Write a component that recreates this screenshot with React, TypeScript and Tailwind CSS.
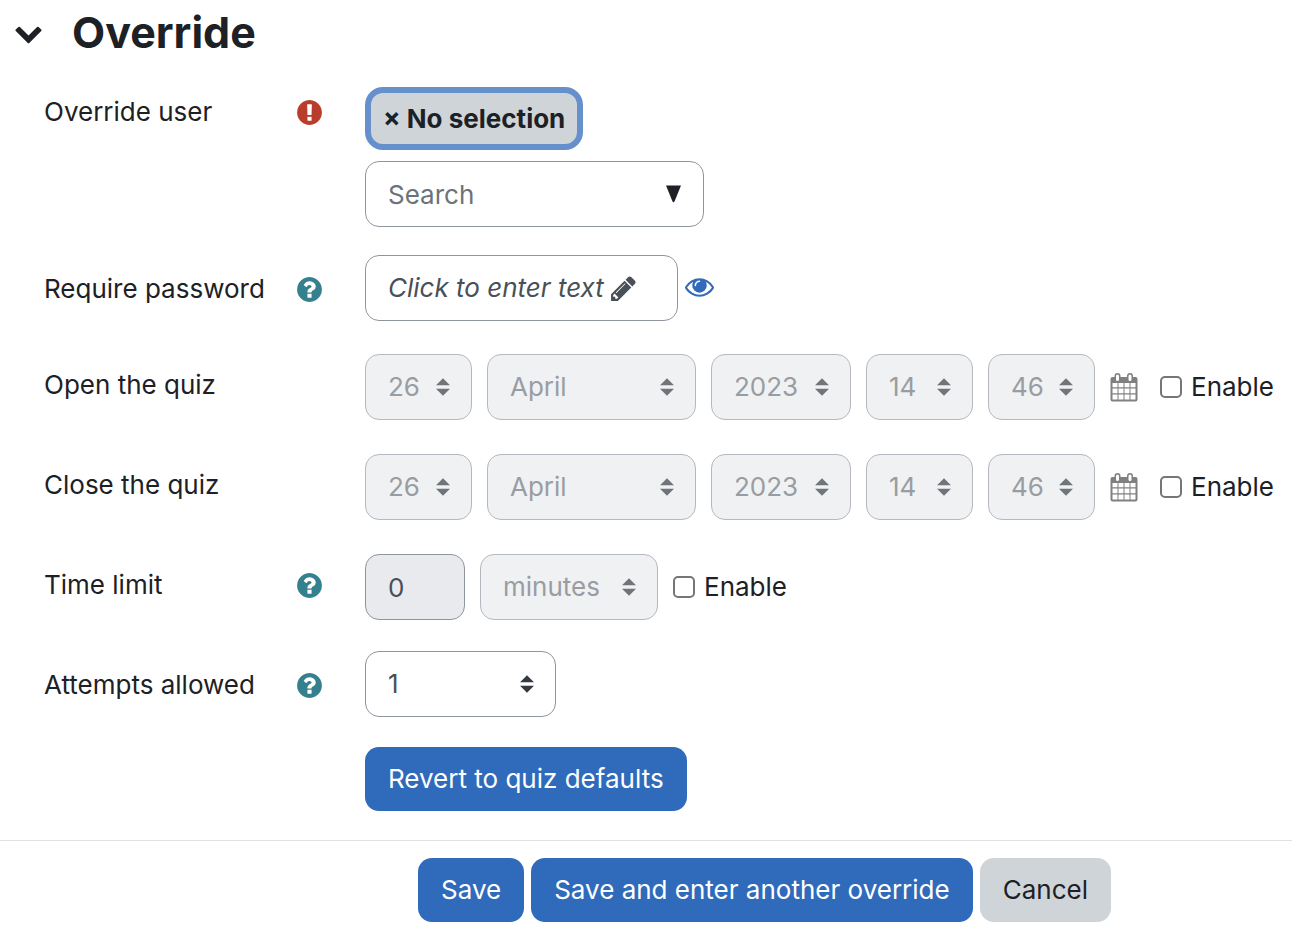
import { useState, type ReactNode } from 'react'
import clsx from 'clsx'

const iconPaths = {
  chevron:
    'M1683 808l-742 741q-19 19-45 19t-45-19l-742-741q-19-19-19-45.500t19-45.500l166-165q19-19 45-19t45 19l531 531 531-531q19-19 45-19t45 19l166 165q19 19 19 45.500t-19 45.500z',
  required:
    'M896 128q209 0 385.500 103t279.500 279.500 103 385.500-103 385.500-279.500 279.500-385.500 103-385.500-103-279.500-279.500-103-385.500 103-385.500 279.500-279.500 385.500-103zm128 1247v-190q0-14-9-23.500t-22-9.500h-192q-13 0-23 10t-10 23v190q0 13 10 23t23 10h192q13 0 22-9.500t9-23.500zm-2-344l18-621q0-12-10-18-10-8-24-8h-220q-14 0-24 8-10 6-10 18l17 621q0 10 10 17.500t24 7.500h185q14 0 23.500-7.500t10.500-17.500z',
  help:
    'M1024 1376v-192q0-14-9-23t-23-9h-192q-14 0-23 9t-9 23v192q0 14 9 23t23 9h192q14 0 23-9t9-23zm256-672q0-88-55.500-163t-138.500-116-170-41q-243 0-371 213-15 24 8 42l132 100q7 6 19 6 16 0 25-12 53-68 86-92 34-24 86-24 48 0 85.500 26t37.500 59q0 38-20 61t-68 45q-63 28-115.500 86.500t-52.500 125.500v36q0 14 9 23t23 9h192q14 0 23-9t9-23q0-19 21.500-49.500t54.500-49.500q32-18 49-28.500t46-35 44.500-48 28-60.500 12.500-81zm384 192q0 209-103 385.500t-279.500 279.500-385.500 103-385.500-103-279.500-279.500-103-385.500 103-385.500 279.500-279.500 385.500-103 385.500 103 279.500 279.500 103 385.500z',
  pencil:
    'M491 1536l91-91-235-235-91 91v107h128v128h107zm523-928q0-22-22-22-10 0-17 7l-542 542q-7 7-7 17 0 22 22 22 10 0 17-7l542-542q7-7 7-17zm-54-192l416 416-832 832h-416v-416zm683 96q0 53-37 90l-166 166-416-416 166-165q36-38 90-38 53 0 91 38l235 234q37 39 37 91z',
  eye:
    'M1664 960q-152-236-381-353 61 104 61 225 0 185-131.500 316.500t-316.500 131.500-316.500-131.500-131.500-316.500q0-121 61-225-229 117-381 353 133 205 333.500 326.500t434.500 121.500 434.500-121.500 333.500-326.500zm-720-384q0-20-14-34t-34-14q-125 0-214.500 89.500t-89.500 214.500q0 20 14 34t34 14 34-14 14-34q0-86 61-147t147-61q20 0 34-14t14-34zm848 384q0 34-20 69-140 230-376.500 368.500t-499.500 138.500-499.500-139-376.500-368q-20-35-20-69t20-69q140-229 376.500-368t499.500-139 499.500 139 376.500 368q20 35 20 69z',
}

function Icon({ name, className }: { name: keyof typeof iconPaths; className?: string }) {
  return (
    <svg viewBox="0 0 1792 1792" fill="currentColor" aria-hidden="true" className={clsx('size-[29px] shrink-0', className)}>
      <path d={iconPaths[name]} />
    </svg>
  )
}

function CalendarIcon() {
  return (
    <svg viewBox="0 0 28 30" aria-hidden="true" className="h-[30px] w-7">
      <path
        fill="#808080"
        fillRule="evenodd"
        d="M2.500 5H4.500V4a3 3 0 0 1 6 0V5H17V4a3 3 0 0 1 6 0V5H25.500A2 2 0 0 1 27.500 7V27.500A2 2 0 0 1 25.500 29.500H2.500A2 2 0 0 1 .5 27.500V7A2 2 0 0 1 2.500 5ZM6 4V7.500a1.500 1.500 0 0 0 3 0V4a1.500 1.500 0 0 0-3 0ZM18.500 4V7.500a1.500 1.500 0 0 0 3 0V4a1.500 1.500 0 0 0-3 0Z"
      />
      <path
        fill="#fff"
        d="M2.500 11H7.500V15.300H2.500ZM8.500 11H13.500V15.300H8.500ZM14.500 11H19.500V15.300H14.500ZM20.500 11H25.500V15.300H20.500ZM2.500 16.500H7.500V21.300H2.500ZM8.500 16.500H13.500V21.300H8.500ZM14.500 16.500H19.500V21.300H14.500ZM20.500 16.500H25.500V21.300H20.500ZM2.500 22.500H7.500V27.500H2.500ZM8.500 22.500H13.500V27.500H8.500ZM14.500 22.500H19.500V27.500H14.500ZM20.500 22.500H25.500V27.500H20.500Z"
      />
    </svg>
  )
}

interface SelectProps {
  label: string
  options: string[]
  width: string
  id?: string
  disabled?: boolean
}

function Select({ label, options, width, id, disabled }: SelectProps) {
  return (
    <div className={clsx('relative shrink-0', width)}>
      <select
        id={id}
        aria-label={label}
        disabled={disabled}
        className="h-[66px] w-full appearance-none rounded-[14px] border border-[#8f959e] bg-white pl-[22px] text-[#495057] disabled:border-[#b5b8be] disabled:bg-[#f0f1f3] disabled:text-[#999da2]"
      >
        {options.map((option) => (
          <option key={option}>{option}</option>
        ))}
      </select>
      <svg
        viewBox="0 0 4 5"
        aria-hidden="true"
        className={clsx('pointer-events-none absolute top-6 right-[22px] h-[18px] w-[14px]', disabled ? 'fill-[#717478]' : 'fill-[#343a40]')}
      >
        <path d="M2 0L0 2h4zm0 5L0 3h4z" />
      </svg>
    </div>
  )
}

interface RowProps {
  label: string
  labelPadding: string
  htmlFor?: string
  icon?: ReactNode
  children: ReactNode
}

function Row({ label, labelPadding, htmlFor, icon, children }: RowProps) {
  return (
    <div className="grid grid-cols-[321px_1fr]">
      <div className={clsx('flex items-start justify-between pr-[41px]', labelPadding)}>
        <label htmlFor={htmlFor} className="leading-10">
          {label}
        </label>
        {icon && <span className="flex h-10 items-center">{icon}</span>}
      </div>
      {children}
    </div>
  )
}

function HelpButton({ topic }: { topic: string }) {
  return (
    <button type="button" aria-label={`Help with ${topic}`} className="text-[#35808f]">
      <Icon name="help" />
    </button>
  )
}

function Enable({ checked, onChange }: { checked: boolean; onChange: (checked: boolean) => void }) {
  return (
    <label className="flex items-center gap-[9px]">
      <input
        type="checkbox"
        checked={checked}
        onChange={(e) => onChange(e.target.checked)}
        className="size-[22px] appearance-none rounded-[5px] border-2 border-[#767676] bg-white checked:bg-[#306aba]"
      />
      Enable
    </label>
  )
}

function DateRow({ label }: { label: string }) {
  const [enabled, setEnabled] = useState(false)

  return (
    <Row label={label} labelPadding="pt-[11px]">
      <div className="flex items-center">
        <div className="flex gap-[15px]">
          <Select label={`${label} day`} options={['26']} width="w-[107px]" disabled={!enabled} />
          <Select label={`${label} month`} options={['April']} width="w-[209px]" disabled={!enabled} />
          <Select label={`${label} year`} options={['2023']} width="w-[140px]" disabled={!enabled} />
          <Select label={`${label} hour`} options={['14']} width="w-[107px]" disabled={!enabled} />
          <Select label={`${label} minute`} options={['46']} width="w-[107px]" disabled={!enabled} />
        </div>
        <button type="button" aria-label={`${label} calendar`} className="mr-[22px] ml-[15px]">
          <CalendarIcon />
        </button>
        <Enable checked={enabled} onChange={setEnabled} />
      </div>
    </Row>
  )
}

export default function App() {
  const [open, setOpen] = useState(true)
  const [limited, setLimited] = useState(false)

  const buttonClass = 'h-16 rounded-[14px] px-[23px]'

  return (
    <form
      onSubmit={(e) => e.preventDefault()}
      className="bg-white font-[Inter,'Liberation_Sans',sans-serif] text-[26px] leading-10 text-[#1d2125]"
    >
      <h3 className="flex h-16 items-center gap-[29px] pl-[14px] text-[43px] font-bold">
        <button type="button" aria-expanded={open} aria-label="Collapse Override" onClick={() => setOpen(!open)}>
          <Icon name="chevron" className={open ? undefined : '-rotate-90'} />
        </button>
        Override
      </h3>

      {open && (
        <div className="pt-[23px] pl-11">
          <div className="flex flex-col gap-7">
            <Row
              label="Override user"
              labelPadding="pt-[5px]"
              htmlFor="user"
              icon={<Icon name="required" className="text-[#b93d2b]" />}
            >
              <div className="flex flex-col items-start gap-[11px]">
                <button
                  type="button"
                  className="h-[63px] rounded-[18px] border-[6px] border-[#6590cc] bg-[#cfd4d8] px-3 font-bold"
                >
                  × No selection
                </button>
                <div className="relative w-[339px]">
                  <input
                    id="user"
                    type="text"
                    placeholder="Search"
                    className="h-[66px] w-full rounded-[14px] border border-[#8f959e] px-[22px] placeholder:text-[#6a737b]"
                  />
                  <svg viewBox="0 0 17 18" aria-hidden="true" className="pointer-events-none absolute top-6 right-[22px] h-[18px] w-[17px]">
                    <path d="M1 .5H16L9.500 16.500Q8.500 18 7.500 16.500Z" fill="#1d2125" />
                  </svg>
                </div>
              </div>
            </Row>

            <Row label="Require password" labelPadding="pt-[14px]" icon={<HelpButton topic="Require password" />}>
              <div className="flex items-center gap-[7px]">
                <button
                  type="button"
                  className="flex h-[66px] w-[313px] items-center gap-[5px] rounded-[14px] border border-[#8f959e] pl-[22px] text-[#495057]"
                >
                  <em>Click to enter text</em>
                  <Icon name="pencil" />
                </button>
                <button type="button" aria-label="Reveal password" className="pb-1 text-[#306aba]">
                  <Icon name="eye" />
                </button>
              </div>
            </Row>
          </div>

          <div className="mt-[33px] flex flex-col gap-[34px]">
            <DateRow label="Open the quiz" />
            <DateRow label="Close the quiz" />
            <Row label="Time limit" labelPadding="pt-[11px]" htmlFor="limit" icon={<HelpButton topic="Time limit" />}>
              <div className="flex items-center gap-[15px]">
                <input
                  id="limit"
                  type="text"
                  defaultValue="0"
                  disabled={!limited}
                  className="h-[66px] w-[100px] rounded-[14px] border border-[#8f959e] px-[22px] text-[#495057] disabled:bg-[#e9eaee]"
                />
                <Select label="Time unit" options={['minutes']} width="w-[178px]" disabled={!limited} />
                <Enable checked={limited} onChange={setLimited} />
              </div>
            </Row>
          </div>

          <div className="mt-[31px] flex flex-col gap-[30px]">
            <Row
              label="Attempts allowed"
              labelPadding="pt-[14px]"
              htmlFor="attempts"
              icon={<HelpButton topic="Attempts allowed" />}
            >
              <Select id="attempts" label="Attempts allowed" options={['1', '2', '3']} width="w-[191px]" />
            </Row>
            <div className="pl-[321px]">
              <button type="button" className={clsx(buttonClass, 'bg-[#306aba] text-white')}>
                Revert to quiz defaults
              </button>
            </div>
          </div>
        </div>
      )}

      <div className="mt-[29px] flex gap-[7px] border-t border-[#dee2e6] pt-[17px] pb-[14px] pl-[418px]">
        <button type="submit" className={clsx(buttonClass, 'bg-[#306aba] text-white')}>
          Save
        </button>
        <button type="submit" className={clsx(buttonClass, 'bg-[#306aba] text-white')}>
          Save and enter another override
        </button>
        <button type="button" className={clsx(buttonClass, 'bg-[#cfd4d8]')}>
          Cancel
        </button>
      </div>
    </form>
  )
}
